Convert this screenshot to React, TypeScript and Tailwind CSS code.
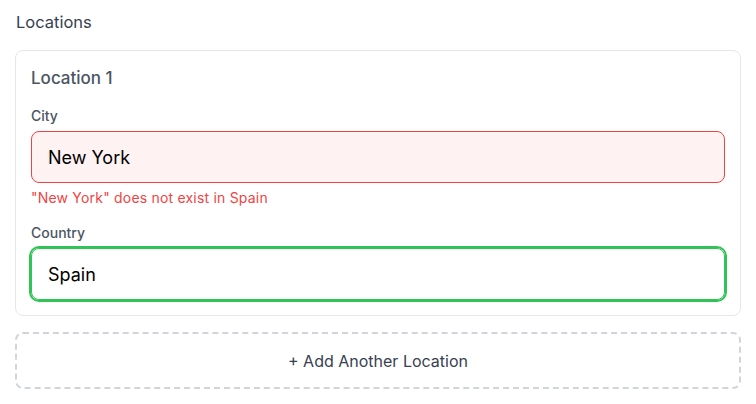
export default function App() {
  const font = { fontFamily: 'Inter, "Noto Sans", sans-serif' };
  return (
    <div className="w-[756px] h-[404px] bg-white px-[15px] pt-[10px]" style={font}>
      <div className="text-[16.5px] leading-6 text-[#374151] pl-px mb-[16px]">Locations</div>
      <div className="rounded-lg border border-[#e5e7eb] p-[15px]">
        <div className="text-[17px] leading-6 font-medium text-[#4b5563] mb-[16px]">Location 1</div>
        <div className="flex flex-col">
          <label className="text-[14px] leading-5 font-medium text-[#4b5563] mb-[5px]">City</label>
          <div className="h-[52px] rounded-lg border border-[#ef4444] bg-[#fef2f2] flex items-center px-4 text-[18px] text-black">
            New York
          </div>
          <div className="mt-[5px] text-[14px] leading-5 tracking-[0.2px] text-[#ef4444]">"New York" does not exist in Spain</div>
          <label className="mt-[15px] text-[14px] leading-5 font-medium text-[#4b5563] mb-[5px]">Country</label>
          <div className="h-[52px] rounded-lg border border-[#2fc455] ring-2 ring-[#2fc455] flex items-center px-4 text-[18px] text-black">
            Spain
          </div>
        </div>
      </div>
      <button className="mt-[16px] w-full h-[57px] rounded-lg border-2 border-dashed border-[#d1d5db] flex items-center justify-center text-[16px] text-[#374151] bg-white">
        + Add Another Location
      </button>
    </div>
  );
}
